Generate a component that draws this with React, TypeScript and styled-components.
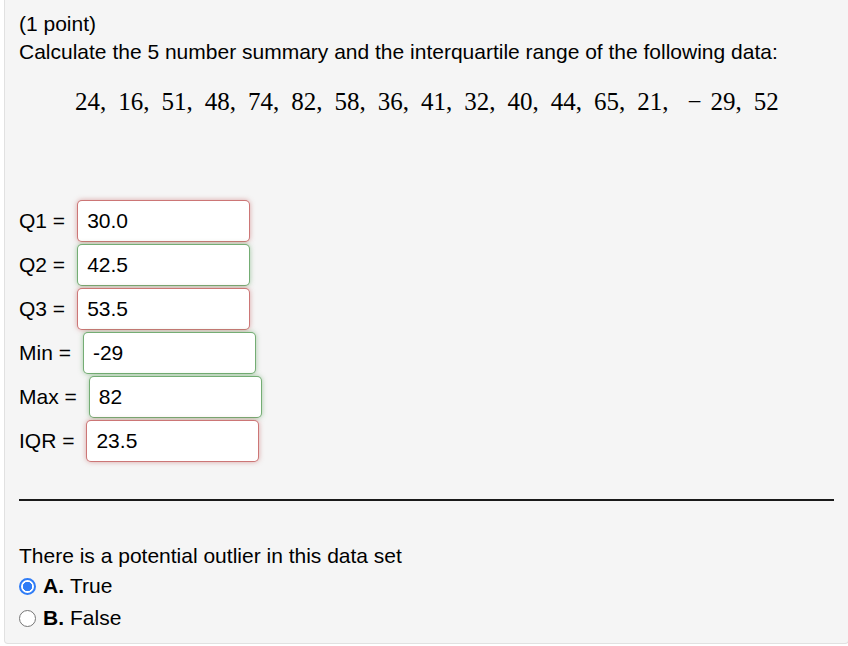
import styled, { createGlobalStyle } from 'styled-components'

const GlobalStyle = createGlobalStyle`
  html, body {
    margin: 0;
    padding: 0;
    background: #ffffff;
    overflow: hidden;
  }
`

const Problem = styled.div`
  box-sizing: border-box;
  width: 845px;
  margin-left: 4px;
  padding: 10px 14px 9px 14px;
  background: #f5f5f5;
  border: 1px solid #e1e1e1;
  border-top: none;
  border-radius: 0 0 4px 4px;
  font-family: 'Liberation Sans', Arial, sans-serif;
  font-size: 21px;
  line-height: 28px;
  color: #000;
`

const Line = styled.div``

const MathLine = styled.div`
  display: flex;
  gap: 12px;
  margin: 16px 0 0 56px;
  height: 40px;
  align-items: center;
  font-family: 'Liberation Serif', 'Times New Roman', serif;
  font-size: 25px;
  line-height: 40px;
`

const MathNum = styled.span<{ $neg?: boolean }>`
  display: inline-flex;
  align-items: center;
  margin-left: ${({ $neg }) => ($neg ? '7px' : '0')};
`

const Minus = styled.span`
  margin-right: 9px;
`

const Answers = styled.div`
  display: flex;
  flex-direction: column;
  gap: 2px;
  margin-top: 78px;
`

const Row = styled.div`
  display: flex;
  align-items: center;
  gap: 12px;
`

const Label = styled.span`
  white-space: pre;
`

const AnswerInput = styled.input<{ $correct: boolean }>`
  box-sizing: border-box;
  width: 173px;
  height: 42px;
  padding: 0 9px;
  background: #fff;
  font-family: 'Liberation Sans', Arial, sans-serif;
  font-size: 21px;
  color: #000;
  border-radius: 5px;
  outline: none;
  border: 1px solid
    ${({ $correct }) => ($correct ? 'rgba(81, 153, 81, 0.8)' : 'rgba(191, 84, 84, 0.8)')};
  box-shadow: 0 0 5px
    ${({ $correct }) => ($correct ? 'rgba(81, 153, 81, 0.5)' : 'rgba(191, 84, 84, 0.5)')};
`

const Rule = styled.hr`
  margin: 37px 0 41px 0;
  border: none;
  height: 2px;
  background: #1a1a1a;
`

const Choice = styled.label`
  display: flex;
  align-items: center;
  height: 32px;
  line-height: 32px;
`

const Radio = styled.input`
  appearance: none;
  box-sizing: border-box;
  width: 17px;
  height: 17px;
  margin: 0 7px 0 0;
  border-radius: 50%;
  border: 1.5px solid #767676;
  background: #fff;

  &:checked {
    border: 2px solid #2f7cf6;
    background: radial-gradient(circle, #2f7cf6 0 4.4px, #fff 5px);
  }
`

const Letter = styled.b`
  margin-right: 6px;
`

const data = [24, 16, 51, 48, 74, 82, 58, 36, 41, 32, 40, 44, 65, 21, -29, 52]

const answers = [
  { label: 'Q1 =', value: '30.0', correct: false },
  { label: 'Q2 =', value: '42.5', correct: true },
  { label: 'Q3 =', value: '53.5', correct: false },
  { label: 'Min =', value: '-29', correct: true },
  { label: 'Max =', value: '82', correct: true },
  { label: 'IQR =', value: '23.5', correct: false },
]

export default function App() {
  return (
    <>
      <GlobalStyle />
      <Problem>
        <Line>(1 point)</Line>
        <Line>
          Calculate the 5 number summary and the interquartile range of the following data:
        </Line>
        <MathLine>
          {data.map((n, i) => (
            <MathNum key={i} $neg={n < 0}>
              {n < 0 && <Minus>−</Minus>}
              {Math.abs(n)}
              {i < data.length - 1 ? ',' : ''}
            </MathNum>
          ))}
        </MathLine>
        <Answers>
          {answers.map((a) => (
            <Row key={a.label}>
              <Label>{a.label}</Label>
              <AnswerInput $correct={a.correct} defaultValue={a.value} />
            </Row>
          ))}
        </Answers>
        <Rule />
        <Line>There is a potential outlier in this data set</Line>
        <Choice>
          <Radio type="radio" name="outlier" defaultChecked />
          <Letter>A.</Letter>True
        </Choice>
        <Choice>
          <Radio type="radio" name="outlier" />
          <Letter>B.</Letter>False
        </Choice>
      </Problem>
    </>
  )
}
